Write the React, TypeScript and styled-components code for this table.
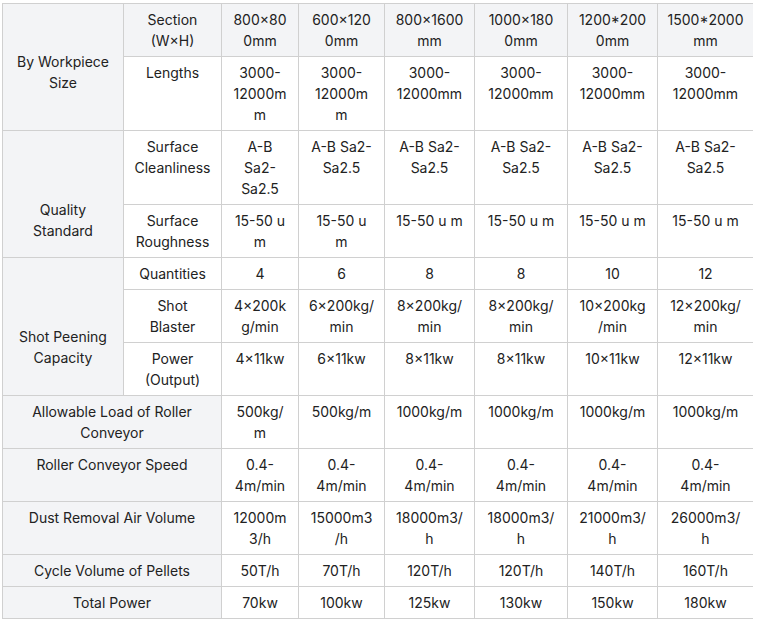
import React from "react";
import styled, { createGlobalStyle } from "styled-components";

const Global = createGlobalStyle`
  html, body { margin: 0; padding: 0; background: #ffffff; }
  body { font-family: Inter, "Noto Sans", "Liberation Sans", sans-serif; }
`;

const Frame = styled.div`
  box-sizing: border-box;
  width: 753px;
  padding: 3px 0 0 2px;
  overflow: hidden;
`;

const Table = styled.table`
  border-collapse: collapse;
  table-layout: fixed;
  width: 752px;
  font-size: 14px;
  line-height: 21px;
  color: #222222;
`;

const Cell = styled.td<{ $head?: boolean; $top?: number; $snug?: boolean }>`
  border: 1px solid #d0d0d0;
  padding: ${(p) => (p.$top !== undefined ? p.$top : 5)}px ${(p) => (p.$snug ? 8 : 10)}px 5px;
  text-align: center;
  vertical-align: top;
  overflow-wrap: anywhere;
  background: ${(p) => (p.$head ? "#f3f4f6" : "#ffffff")};
  font-weight: 400;
`;

const widths = [121, 98, 77, 86, 90, 93, 90, 96];

type Val = string | { text: string; snug: boolean };
type Row = { label?: { text: string; span?: number; top?: number }; sub?: string; values: Val[]; head?: boolean; wide?: string };

const rows: Row[] = [
  { label: { text: "By Workpiece Size", span: 2, top: 47 }, sub: "Section (W×H)", values: ["800×800mm", "600×1200mm", "800×1600 mm", "1000×1800mm", "1200*2000mm", { text: "1500*2000 mm", snug: true }], head: true },
  { sub: "Lengths", values: ["3000-12000mm", "3000-12000mm", "3000-12000mm", "3000-12000mm", "3000-12000mm", "3000-12000mm"] },
  { label: { text: "Quality Standard", span: 2, top: 68 }, sub: "Surface Cleanliness", values: ["A-B Sa2-Sa2.5", "A-B Sa2-Sa2.5", "A-B Sa2-Sa2.5", "A-B Sa2-Sa2.5", "A-B Sa2-Sa2.5", "A-B Sa2-Sa2.5"] },
  { sub: "Surface Roughness", values: ["15-50 u m", "15-50 u m", "15-50 u m", "15-50 u m", "15-50 u m", "15-50 u m"] },
  { label: { text: "Shot Peening Capacity", span: 3, top: 68 }, sub: "Quantities", values: ["4", "6", "8", "8", "10", "12"] },
  { sub: "Shot Blaster", values: ["4×200kg/min", { text: "6×200kg/min", snug: true }, "8×200kg/min", "8×200kg/min", "10×200kg/min", "12×200kg/min"] },
  { sub: "Power (Output)", values: ["4×11kw", "6×11kw", "8×11kw", "8×11kw", "10×11kw", "12×11kw"] },
  { wide: "Allowable Load of Roller Conveyor", values: ["500kg/m", "500kg/m", "1000kg/m", "1000kg/m", "1000kg/m", "1000kg/m"] },
  { wide: "Roller Conveyor Speed", values: ["0.4-4m/min", "0.4-4m/min", "0.4-4m/min", "0.4-4m/min", "0.4-4m/min", "0.4-4m/min"] },
  { wide: "Dust Removal Air Volume", values: ["12000m3/h", "15000m3/h", "18000m3/h", "18000m3/h", "21000m3/h", "26000m3/h"] },
  { wide: "Cycle Volume of Pellets", values: ["50T/h", "70T/h", "120T/h", "120T/h", "140T/h", "160T/h"] },
  { wide: "Total Power", values: ["70kw", "100kw", "125kw", "130kw", "150kw", "180kw"] },
];

export default function App() {
  return (
    <>
      <Global />
      <Frame>
        <Table>
          <colgroup>
            {widths.map((w, i) => (
              <col key={i} style={{ width: w }} />
            ))}
          </colgroup>
          <tbody>
            {rows.map((r, i) => (
              <tr key={i}>
                {r.label && (
                  <Cell $head rowSpan={r.label.span} $top={r.label.top}>
                    {r.label.text}
                  </Cell>
                )}
                {r.wide && (
                  <Cell $head colSpan={2}>
                    {r.wide}
                  </Cell>
                )}
                {r.sub && <Cell $head={r.head}>{r.sub}</Cell>}
                {r.values.map((v, j) => {
                  const text = typeof v === "string" ? v : v.text;
                  const snug = typeof v === "string" ? false : v.snug;
                  return (
                    <Cell key={j} $head={r.head} $snug={snug}>
                      {text}
                    </Cell>
                  );
                })}
              </tr>
            ))}
          </tbody>
        </Table>
      </Frame>
    </>
  );
}
